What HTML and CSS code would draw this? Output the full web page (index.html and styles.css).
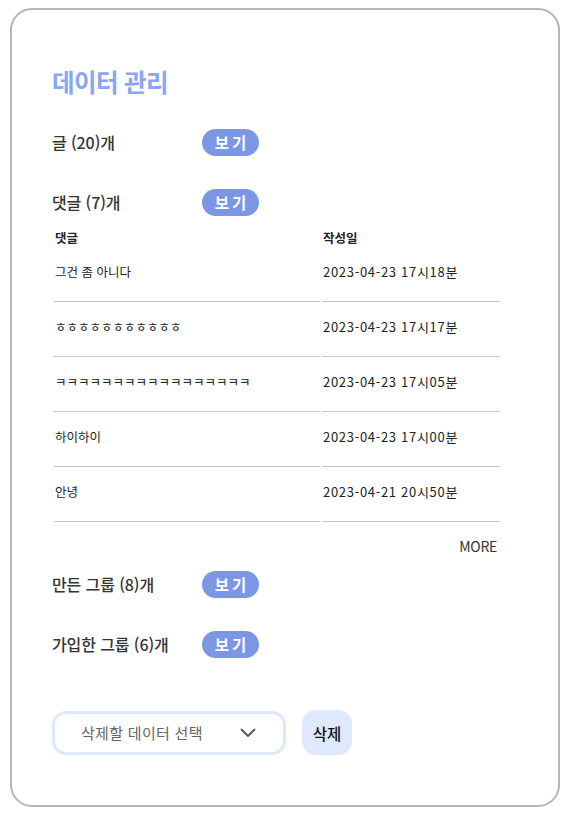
FILE: index.html
```html
<!DOCTYPE html>
<html lang="ko">
<head>
<meta charset="utf-8">
<title>데이터 관리</title>
<link rel="stylesheet" href="styles.css">
</head>
<body>
<div class="card">
  <h2 class="title">데이터 관리</h2>

  <div class="row">
    <span class="label">글 (20)개</span>
    <button class="view-btn">보기</button>
  </div>

  <div class="row">
    <span class="label">댓글 (7)개</span>
    <button class="view-btn">보기</button>
  </div>

  <table class="comments">
    <thead>
      <tr><th class="col-text">댓글</th><th class="col-date">작성일</th></tr>
    </thead>
    <tbody>
      <tr><td>그건 좀 아니다</td><td class="date">2023-04-23 17시18분</td></tr>
      <tr><td>ㅎㅎㅎㅎㅎㅎㅎㅎㅎㅎㅎ</td><td class="date">2023-04-23 17시17분</td></tr>
      <tr><td>ㅋㅋㅋㅋㅋㅋㅋㅋㅋㅋㅋㅋㅋㅋㅋㅋㅋ</td><td class="date">2023-04-23 17시05분</td></tr>
      <tr><td>하이하이</td><td class="date">2023-04-23 17시00분</td></tr>
      <tr><td>안녕</td><td class="date">2023-04-21 20시50분</td></tr>
    </tbody>
  </table>
  <div class="more">MORE</div>

  <div class="row row-after-more">
    <span class="label">만든 그룹 (8)개</span>
    <button class="view-btn">보기</button>
  </div>

  <div class="row">
    <span class="label">가입한 그룹 (6)개</span>
    <button class="view-btn">보기</button>
  </div>

  <div class="delete-bar">
    <div class="select">
      <span class="select-text">삭제할 데이터 선택</span>
      <svg class="chevron" width="16" height="10" viewBox="0 0 16 10" aria-hidden="true">
        <path d="M1.5 1.5 L8 8 L14.5 1.5" fill="none" stroke="#555" stroke-width="1.8" stroke-linecap="round" stroke-linejoin="round"/>
      </svg>
    </div>
    <button class="delete-btn">삭제</button>
  </div>
</div>
</body>
</html>
```

FILE: styles.css
```css
html, body {
  margin: 0;
  padding: 0;
  background: #ffffff;
}

body {
  font-family: "Noto Sans CJK KR", "Noto Sans", sans-serif;
  color: #333333;
}

.card {
  box-sizing: border-box;
  width: 550px;
  height: 799px;
  margin: 8px 0 0 10px;
  border: 2px solid #b5b5b5;
  border-radius: 22px;
  padding: 56px 0 0 40px;
  display: flex;
  flex-direction: column;
  align-items: flex-start;
}

.title {
  margin: 0 0 30px 0;
  font-size: 24.5px;
  line-height: 32px;
  font-weight: 700;
  letter-spacing: -0.6px;
  color: #88a6f6;
}

.row {
  display: flex;
  align-items: center;
  height: 28px;
  margin-bottom: 32px;
}

.row-after-more {
  margin-top: 14px;
}

.label {
  width: 150px;
  font-size: 16px;
  font-weight: 500;
  letter-spacing: -0.1px;
  color: #333333;
}

.view-btn {
  width: 57px;
  height: 27px;
  border: none;
  border-radius: 14px;
  background: #7b96e5;
  color: #ffffff;
  font-family: inherit;
  font-size: 15.5px;
  font-weight: 700;
  letter-spacing: 3px;
  padding: 0 0 0 3px;
  line-height: 27px;
}

.comments {
  margin-top: -21px;
  width: 450px;
  border-spacing: 2px;
  border-collapse: separate;
  font-size: 12.5px;
  color: #222222;
}

.comments th {
  text-align: left;
  font-weight: 700;
  font-size: 12.5px;
  height: 18px;
  padding: 0 1px;
  line-height: 18px;
  color: #222222;
}

.comments th.col-text {
  width: 264px;
}

.comments td {
  height: 45px;
  padding: 0 1px 7px 1px;
  border-bottom: 1px solid #c6c6c6;
  vertical-align: middle;
}

.comments td.date {
  font-size: 13px;
  letter-spacing: 0.7px;
}

.more {
  width: 445px;
  text-align: right;
  font-size: 14px;
  line-height: 20px;
  margin-top: 12px;
  color: #333333;
  letter-spacing: -0.3px;
}

.delete-bar {
  display: flex;
  align-items: center;
  gap: 16px;
  margin-top: 20px;
}

.select {
  box-sizing: border-box;
  width: 234px;
  height: 44px;
  border: 3px solid #dde8fd;
  border-radius: 14px;
  padding: 0 27px 0 26px;
  display: flex;
  align-items: center;
  justify-content: space-between;
}

.select-text {
  font-size: 15px;
  letter-spacing: 0.3px;
  color: #666666;
}

.chevron {
  display: block;
}

.delete-btn {
  width: 50px;
  height: 45px;
  border: none;
  border-radius: 14px;
  background: #dfe9fd;
  color: #111111;
  font-family: inherit;
  font-size: 15.5px;
  font-weight: 500;
  padding: 0;
}
```
